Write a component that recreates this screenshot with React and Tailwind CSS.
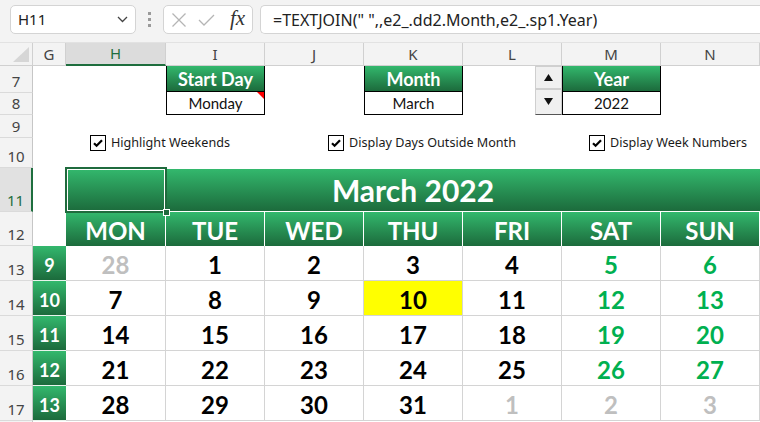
import React from 'react';

const GR = "bg-gradient-to-b from-[#33b86d] to-[#1c6b3c]";

const rowHeads = [
  [7, 'h-[27px]'], [8, 'h-[22px]'], [9, 'h-[23px]'], [10, 'h-[30px]'],
  [11, 'h-[44px]'], [12, 'h-[34px]'], [13, 'h-[35px]'], [14, 'h-[35px]'],
  [15, 'h-[35px]'], [16, 'h-[35px]'], [17, 'h-[35px]'],
];

const cols = ['G', 'H', 'I', 'J', 'K', 'L', 'M', 'N'];
const colW = ['w-[33px]', 'w-[100px]', 'w-[99px]', 'w-[99px]', 'w-[99px]', 'w-[99px]', 'w-[99px]', 'w-[99px]'];

const weeks = [
  [9, [[28, 'o'], [1, 'n'], [2, 'n'], [3, 'n'], [4, 'n'], [5, 'w'], [6, 'w']]],
  [10, [[7, 'n'], [8, 'n'], [9, 'n'], [10, 't'], [11, 'n'], [12, 'w'], [13, 'w']]],
  [11, [[14, 'n'], [15, 'n'], [16, 'n'], [17, 'n'], [18, 'n'], [19, 'w'], [20, 'w']]],
  [12, [[21, 'n'], [22, 'n'], [23, 'n'], [24, 'n'], [25, 'n'], [26, 'w'], [27, 'w']]],
  [13, [[28, 'n'], [29, 'n'], [30, 'n'], [31, 'n'], [1, 'o'], [2, 'o'], [3, 'o']]],
];

const dayNames = ['MON', 'TUE', 'WED', 'THU', 'FRI', 'SAT', 'SUN'];

const numColor = { o: 'text-[#bfbfbf]', n: 'text-black', w: 'text-[#00b050]', t: 'text-black' };

function Check() {
  return (
    <svg width="16" height="16" viewBox="0 0 16 16" className="shrink-0">
      <rect x="0.5" y="0.5" width="15" height="15" fill="white" stroke="#000" strokeWidth="1" />
      <path d="M4 8.2 L6.6 10.8 L12 5.2" fill="none" stroke="#000" strokeWidth="2.2" />
    </svg>
  );
}

function CheckLabel({ text, className }) {
  return (
    <div className={"flex items-center gap-[5px] " + className}>
      <Check />
      <span className="text-[12.6px] text-[#1a1a1a] leading-none" style={{ fontFamily: '"Noto Sans", sans-serif' }}>{text}</span>
    </div>
  );
}

function ControlPair({ title, value, comment }) {
  return (
    <div className="flex flex-col">
      <div className={GR + " h-[26px] border-x border-b border-black flex items-center justify-center text-white font-bold text-[18px] leading-none"}>
        {title}
      </div>
      <div className="relative h-[23px] border-x border-b border-black bg-white flex items-center justify-center text-[15px] text-[#111] leading-none pt-[1px]">
        {value}
        {comment && (
          <div className="absolute top-0 right-0 w-0 h-0 border-t-[7px] border-t-[#ff0000] border-l-[7px] border-l-transparent" />
        )}
      </div>
    </div>
  );
}

export default function App() {
  const sheetFont = { fontFamily: 'Lato, "Liberation Sans", sans-serif' };
  const uiFont = { fontFamily: '"Noto Sans", "Open Sans", sans-serif' };
  return (
    <div className="w-[760px] h-[422px] overflow-hidden bg-white relative">
      {/* Formula bar */}
      <div className="h-[43px] bg-[#f3f3f3] flex items-start pt-[5px] border-b border-[#e2e2e2]" style={uiFont}>
        <div className="ml-[10px] w-[126px] h-[29px] bg-white border border-[#d4d4d4] rounded-[5px] flex items-center justify-between pl-[7px] pr-[7px]">
          <span className="text-[15px] text-[#222]">H11</span>
          <svg width="11" height="7" viewBox="0 0 11 7"><path d="M1 1 L5.5 5.5 L10 1" fill="none" stroke="#444" strokeWidth="1.3" /></svg>
        </div>
        <div className="w-[27px] h-[29px] flex flex-col items-center justify-center gap-[3px]">
          <div className="w-[3px] h-[3px] bg-[#9a9a9a]" />
          <div className="w-[3px] h-[3px] bg-[#9a9a9a]" />
          <div className="w-[3px] h-[3px] bg-[#9a9a9a]" />
        </div>
        <div className="w-[90px] h-[29px] bg-white border border-[#d4d4d4] rounded-[5px] flex items-center pl-[6px]">
          <svg width="16" height="16" viewBox="0 0 16 16" className="ml-[1px]"><path d="M1.5 1.5 L14.5 14.5 M14.5 1.5 L1.5 14.5" stroke="#b5b5b5" strokeWidth="1.3" /></svg>
          <svg width="17" height="12" viewBox="0 0 17 12" className="ml-[11px]"><path d="M1 6 L6 11 L16 1" fill="none" stroke="#b5b5b5" strokeWidth="1.3" /></svg>
          <span className="ml-[15px] text-[21px] italic text-[#333] leading-none -mt-[3px]" style={{ fontFamily: '"Liberation Serif", "DejaVu Serif", serif' }}>fx</span>
        </div>
        <div className="ml-[7px] flex-1 h-[29px] bg-white border border-r-0 border-[#d4d4d4] rounded-l-[5px] flex items-center pl-[12px]">
          <span className="text-[16px] text-[#222] whitespace-nowrap">=TEXTJOIN(" ",,e2_.dd2.Month,e2_.sp1.Year)</span>
        </div>
      </div>

      {/* Column headers */}
      <div className="h-[23px] flex bg-[#f3f3f3]" style={uiFont}>
        <div className="w-[33px] h-full border-r border-b border-[#d0d0d0] relative">
          <svg width="16" height="15" viewBox="0 0 16 15" className="absolute right-[3px] bottom-[3px]"><path d="M16 0 L16 15 L0 15 Z" fill="#d6d6d6" /></svg>
        </div>
        {cols.map((c, i) => (
          <div
            key={c}
            className={
              colW[i] + " h-full flex items-center justify-center text-[15px] border-r " +
              (c === 'H'
                ? 'bg-[#dcdcdc] text-[#1e6e3e] border-b-2 border-b-[#1e6e3e] border-r-[#d0d0d0]'
                : 'text-[#444] border-b border-[#d0d0d0]')
            }
          >
            {c}
          </div>
        ))}
      </div>

      <div className="flex">
        {/* Row headers */}
        <div className="w-[33px] flex flex-col bg-[#f3f3f3]" style={uiFont}>
          {rowHeads.map(([n, h]) => (
            <div
              key={n}
              className={
                h + " flex items-end justify-center leading-[22px] text-[15px] border-b border-[#dadada] " +
                (n === 11
                  ? 'bg-[#e1e1e1] text-[#1e6e3e] border-r-2 border-r-[#1e6e3e]'
                  : 'text-[#444] border-r border-r-[#c6c6c6]')
              }
            >
              {n}
            </div>
          ))}
          <div className="h-[10px] border-r border-r-[#c6c6c6]" />
        </div>

        {/* Sheet */}
        <div className="flex-1 flex flex-col relative" style={sheetFont}>
          {/* Rows 7-10 */}
          <div className="grid grid-cols-[33px_100px_99px_99px_99px_99px_99px_99px] grid-rows-[27px_22px_23px_30px] h-[102px]">
            <div className="col-start-3 row-start-1 row-span-2">
              <ControlPair title="Start Day" value="Monday" comment />
            </div>
            <div className="col-start-5 row-start-1 row-span-2">
              <ControlPair title="Month" value="March" />
            </div>
            <div className="col-start-6 row-start-1 row-span-2 flex justify-end">
              <div className="w-[27px] flex flex-col">
                <div className="h-[23px] bg-[#f0f0f0] border border-[#cfcfcf] flex items-center justify-center">
                  <svg width="9" height="7" viewBox="0 0 9 7"><path d="M4.5 0 L9 7 L0 7 Z" fill="#111" /></svg>
                </div>
                <div className="h-[27px] bg-[#f0f0f0] border border-[#cfcfcf] border-b-[#555] flex items-center justify-center">
                  <svg width="9" height="7" viewBox="0 0 9 7"><path d="M0 0 L9 0 L4.5 7 Z" fill="#111" /></svg>
                </div>
              </div>
            </div>
            <div className="col-start-7 row-start-1 row-span-2">
              <ControlPair title="Year" value="2022" />
            </div>
            <div className="col-start-1 col-span-8 row-start-3 row-span-2 flex items-start pt-[20px]">
              <CheckLabel text="Highlight Weekends" className="ml-[57px] w-[238px]" />
              <CheckLabel text="Display Days Outside Month" className="w-[261px]" />
              <CheckLabel text="Display Week Numbers" />
            </div>
          </div>

          {/* Row 11 title */}
          <div className="flex h-[44px]">
            <div className="w-[33px]" />
            <div className={GR + " flex-1 mt-[1px] border-b border-white flex items-center justify-center text-white font-bold text-[30px] leading-none"}>
              March 2022
            </div>
          </div>

          {/* Row 12 day names */}
          <div className="flex h-[34px]">
            <div className="w-[33px]" />
            {dayNames.map((d, i) => (
              <div
                key={d}
                className={GR + " " + colW[i + 1] + " border-r border-white flex items-center justify-center pt-[3px] text-white font-bold text-[24px] leading-none"}
              >
                {d}
              </div>
            ))}
          </div>

          {/* Rows 13-17 */}
          {weeks.map(([wk, days]) => (
            <div key={wk} className="flex h-[35px]">
              <div className={GR + " w-[33px] border-b border-[#e8f4ec] flex items-center justify-center pt-[3px] text-white font-bold text-[18px] leading-none"}>
                {wk}
              </div>
              {days.map(([n, t], i) => (
                <div
                  key={i}
                  className={
                    colW[i + 1] + " border-r border-b border-[#d4d4d4] flex items-center justify-center pt-[4px] font-bold text-[24px] leading-none " +
                    numColor[t] + (t === 't' ? ' bg-[#ffff00]' : '')
                  }
                >
                  {n}
                </div>
              ))}
            </div>
          ))}

          {/* Selection overlay on H11 */}
          <div className="absolute left-[32px] top-[101px] w-[102px] h-[46px] border-2 border-[#1f6b3d] pointer-events-none">
            <div className="w-full h-full border border-white" />
            <div className="absolute -right-[5px] -bottom-[5px] w-[7px] h-[7px] bg-[#1f6b3d] border border-white" />
          </div>
        </div>
      </div>
    </div>
  );
}
